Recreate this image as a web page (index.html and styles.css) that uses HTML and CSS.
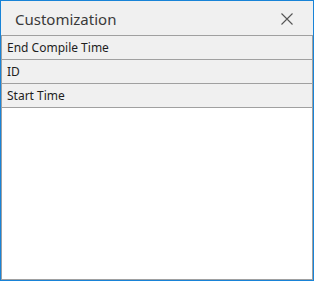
FILE: index.html
```html
<!DOCTYPE html>
<html lang="en">

<head>
    <meta charset="UTF-8" />
    <meta name="viewport" content="width=device-width, initial-scale=1.0" />
    <title>Customization</title>
    <link rel="stylesheet" href="styles.css">
</head>

<body>
    <div class="dialog">
        <div class="title-bar">
            <span class="title">Customization</span>
            <button class="close" aria-label="Close">
                <svg width="12" height="12" viewBox="0 0 12 12">
                    <path d="M0.5 0.5 L11.5 11.5 M11.5 0.5 L0.5 11.5" stroke="#555" stroke-width="1.1" fill="none" />
                </svg>
            </button>
        </div>
        <div class="field-list">
            <div class="field">End Compile Time</div>
            <div class="field">ID</div>
            <div class="field">Start Time</div>
        </div>
    </div>
</body>

</html>
```

FILE: styles.css
```css
body,
html {
    margin: 0;
    padding: 0;
    height: 100%;
    font-family: "Noto Sans", "Open Sans", sans-serif;
}

.dialog {
    width: 314px;
    height: 281px;
    box-sizing: border-box;
    border: 1px solid #1883d7;
    background: #f0f0f0;
    display: flex;
    flex-direction: column;
}

.title-bar {
    height: 34px;
    box-sizing: border-box;
    display: flex;
    align-items: center;
    justify-content: space-between;
    padding: 1px 20px 0 14px;
}

.title {
    font-size: 15px;
    color: #3a3a3a;
}

.close {
    background: none;
    border: none;
    padding: 0;
    width: 12px;
    height: 12px;
    display: flex;
    cursor: pointer;
}

.field-list {
    flex: 1;
    border: 1px solid #a0a0a0;
    background: #fff;
}

.field {
    height: 23px;
    line-height: 23px;
    border-bottom: 1px solid #a0a0a0;
    background: #f0f0f0;
    padding-left: 5px;
    font-size: 12px;
    color: #1e1e1e;
}
```
